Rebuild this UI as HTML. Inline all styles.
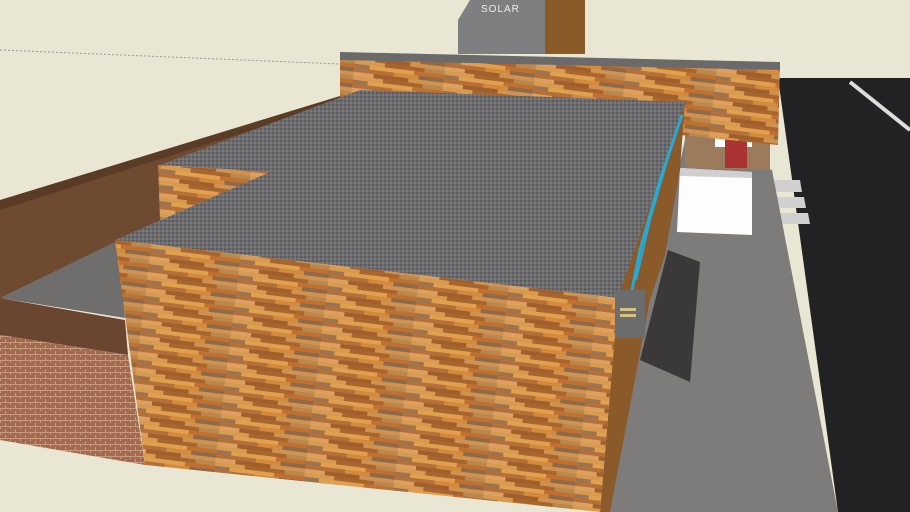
<!DOCTYPE html>
<html><head><style>html,body{margin:0;padding:0;background:#e9e7d3;}svg{display:block}</style></head>
<body>
<svg width="910" height="512" viewBox="0 0 910 512" xmlns="http://www.w3.org/2000/svg">
<defs>
<pattern id="wood" width="90" height="16" patternUnits="userSpaceOnUse" patternTransform="rotate(7)">
<rect width="90" height="16" fill="#c47f3e"/>
<rect x="0" y="0" width="30" height="4" fill="#d99a4f"/><rect x="30" y="0" width="40" height="4" fill="#a8662e"/><rect x="70" y="0" width="20" height="4" fill="#b8884e"/>
<rect x="0" y="4" width="15" height="4" fill="#9c7550"/><rect x="15" y="4" width="45" height="4" fill="#e0a050"/><rect x="60" y="4" width="30" height="4" fill="#c27030"/>
<rect x="0" y="8" width="40" height="4" fill="#b5703a"/><rect x="40" y="8" width="25" height="4" fill="#d48a3c"/><rect x="65" y="8" width="25" height="4" fill="#8e6a48"/>
<rect x="0" y="12" width="20" height="4" fill="#dca060"/><rect x="20" y="12" width="35" height="4" fill="#a05f2c"/><rect x="55" y="12" width="35" height="4" fill="#cf9250"/>
</pattern>
<pattern id="roof" width="4" height="4" patternUnits="userSpaceOnUse"><rect width="4" height="4" fill="#6c6c6e"/><rect width="2" height="2" fill="#5c5c5e"/><rect x="2" y="2" width="2" height="2" fill="#7a7a7c"/></pattern>
<pattern id="brick" width="10" height="6" patternUnits="userSpaceOnUse"><rect width="10" height="6" fill="#a56a4e"/><rect width="10" height="1" fill="#c49a80"/><rect x="0" width="1" height="3" fill="#c49a80"/><rect x="5" y="3" width="1" height="3" fill="#c49a80"/></pattern>
</defs>
<rect width="910" height="512" fill="#e9e7d3"/>
<line x1="0" y1="50" x2="340" y2="64" stroke="#999" stroke-dasharray="2 2" stroke-width="1"/>
<polygon points="778,78 910,78 910,512 838,512" fill="#222224"/>
<line x1="850" y1="82" x2="910" y2="130" stroke="#ddd" stroke-width="4"/>
<polygon points="773,180 800,180 802,192 775,192" fill="#d0d0d0"/>
<polygon points="776,197 804,197 806,208 778,208" fill="#d0d0d0"/>
<polygon points="779,213 808,213 810,224 781,224" fill="#d0d0d0"/>
<polygon points="685,140 772,170 838,512 608,512 650,300" fill="#7e7c7a"/>
<polygon points="685,118 770,118 770,170 685,168" fill="#9c7a5c"/>
<rect x="715" y="117" width="37" height="30" fill="#fafafa"/>
<rect x="725" y="128" width="22" height="40" fill="#a33"/>
<polygon points="340,58 780,65 778,145 340,100" fill="url(#wood)"/>
<polygon points="340,52 780,62 780,70 340,60" fill="#6a6a6a"/>
<polygon points="458,20 470,0 545,0 545,54 458,54" fill="#7d7f80"/>
<polygon points="545,0 585,0 585,54 545,54" fill="#8a5a28"/>
<text x="481" y="12" font-family="Liberation Sans, sans-serif" font-size="10" fill="#eee" letter-spacing="1">SOLAR</text>
<polygon points="0,205 340,100 340,108 160,168 160,222 0,300" fill="#6e4a30"/>
<polygon points="0,200 340,96 340,102 0,210" fill="#5a3c26"/>
<polygon points="0,298 160,220 118,240 125,318" fill="#6f6e6c"/>
<polygon points="0,298 125,320 128,355 0,335" fill="#6a4630"/>
<polygon points="0,335 128,355 145,465 0,440" fill="url(#brick)"/>
<polygon points="158,165 272,172 160,220" fill="url(#wood)"/>
<polygon points="680,168 752,172 752,235 677,232" fill="#fdfdfd"/>
<polygon points="680,168 752,172 752,178 680,176" fill="#cfcfcf"/>
<polygon points="668,250 700,262 690,382 640,360" fill="#3a3838"/>
<polygon points="685,100 680,170 665,255 650,300 610,512 600,512 618,297" fill="#8a5a2a"/>
<polygon points="360,90 686,102 618,298 115,240 270,172 160,165" fill="url(#roof)"/>
<polyline points="682,115 660,180 640,250 632,290" fill="none" stroke="#2aa8d0" stroke-width="3"/>
<polyline points="676,130 650,220 636,280" fill="none" stroke="#2aa8d0" stroke-width="2"/>
<polygon points="115,240 618,298 600,512 145,465" fill="url(#wood)"/>
<polygon points="145,465 600,512 145,512" fill="#e9e7d3"/>
<rect x="615" y="290" width="30" height="48" fill="#6b6d6c"/>
<rect x="620" y="308" width="16" height="3" fill="#d8c080"/><rect x="620" y="314" width="16" height="3" fill="#d8c080"/>
</svg>
</body></html>
